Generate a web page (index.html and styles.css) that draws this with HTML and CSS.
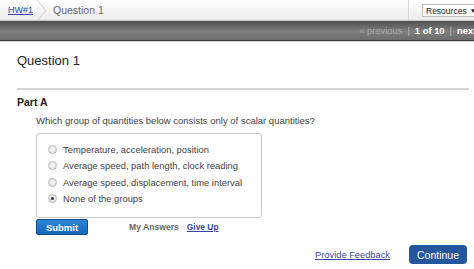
FILE: index.html
```html
<!DOCTYPE html>
<html>
<head>
<meta charset="utf-8">
<link rel="stylesheet" href="styles.css">
</head>
<body>
<header class="crumbs">
  <a class="crumb-link" href="#">HW#1</a>
  <svg class="chev" width="12" height="21" viewBox="0 0 12 21"><path d="M1 0 L10 10.5 L1 21" fill="none" stroke="#d0d0d0" stroke-width="1"/></svg>
  <span class="crumb-current">Question 1</span>
  <span class="spacer"></span>
  <span class="vdiv"></span>
  <span class="resources">Resources<span class="arrow">▼</span></span>
</header>
<nav class="pager">
  <span class="prev">« previous</span>
  <span class="sep">|</span>
  <span class="count">1 of 10</span>
  <span class="sep">|</span>
  <span class="next">next</span>
</nav>
<main class="content">
  <h1 class="title">Question 1</h1>
  <hr class="rule">
  <h2 class="part">Part A</h2>
  <div class="body">
    <p class="prompt">Which group of quantities below consists only of scalar quantities?</p>
    <div class="choices">
      <label class="choice"><span class="radio"></span>Temperature, acceleration, position</label>
      <label class="choice"><span class="radio"></span>Average speed, path length, clock reading</label>
      <label class="choice"><span class="radio"></span>Average speed, displacement, time interval</label>
      <label class="choice"><span class="radio checked"></span>None of the groups</label>
    </div>
    <div class="actions">
      <span class="submit">Submit</span>
      <span class="my-answers">My Answers</span>
      <a class="give-up" href="#">Give Up</a>
    </div>
  </div>
  <div class="footer">
    <a class="feedback" href="#">Provide Feedback</a>
    <span class="continue">Continue</span>
  </div>
</main>
</body>
</html>
```
FILE: styles.css
```css
* { box-sizing: border-box; }
html, body { margin: 0; padding: 0; }
body {
  width: 474px;
  height: 269px;
  overflow: hidden;
  background: #fff;
  font-family: "Liberation Sans", Arial, sans-serif;
  color: #333;
}
.crumbs {
  height: 21px;
  display: flex;
  align-items: center;
  background: linear-gradient(#ffffff, #ececec);
  border-bottom: 1px solid #c8c8c8;
}
.crumb-link {
  margin-left: 8px;
  font-size: 9px;
  color: #3344aa;
  text-decoration: underline;
}
.chev { margin-left: 3px; align-self: stretch; }
.crumb-current {
  margin-left: 5px;
  font-size: 10.5px;
  color: #6a6a6a;
}
.spacer { flex: 1; }
.vdiv {
  align-self: stretch;
  width: 1px;
  background: #d8d8d8;
  margin-right: 13px;
}
.resources {
  height: 13px;
  padding: 0 0 0 3px;
  border: 1px solid #bbb;
  border-right: none;
  background: #fff;
  font-size: 8.5px;
  line-height: 11px;
  color: #222;
  white-space: nowrap;
  width: 52px;
  overflow: hidden;
}
.arrow { font-size: 6.5px; margin-left: 3px; vertical-align: 1px; }
.pager {
  height: 20px;
  display: flex;
  align-items: center;
  justify-content: flex-end;
  gap: 5px;
  background: linear-gradient(#4f4f4f, #7f7f7f 55%, #6c6c6c);
  border-bottom: 1px solid #3a3a3a;
  box-shadow: 0 1px 0 #d0d0d0;
  font-size: 9.4px;
  white-space: nowrap;
  overflow: hidden;
}
.prev { color: #a8a8a8; }
.sep { color: #bbb; font-weight: normal; }
.count, .next { color: #fff; font-weight: bold; }
.next { width: 17px; overflow: hidden; }
.content { padding: 0 5px 0 17px; }
.title {
  margin: 12px 0 0;
  font-size: 13px;
  font-weight: normal;
  color: #222;
  line-height: 16px;
}
.rule {
  margin: 19px 0 0;
  border: none;
  height: 2px;
  background: #d4d4d4;
}
.part {
  margin: 6px 0 0;
  font-size: 10.5px;
  font-weight: bold;
  color: #222;
  line-height: 12px;
}
.body { padding-left: 19px; }
.prompt {
  margin: 6px 0 0;
  font-size: 9.5px;
  color: #444;
  line-height: 13px;
}
.choices {
  margin-top: 6px;
  width: 226px;
  height: 85px;
  border: 1px solid #c8c8c8;
  border-radius: 3px;
  padding: 7px 0 0 11px;
  display: flex;
  flex-direction: column;
}
.choice {
  display: flex;
  align-items: center;
  height: 16.5px;
  font-size: 9.4px;
  color: #444;
  white-space: nowrap;
}
.radio {
  width: 9px;
  height: 9px;
  border-radius: 50%;
  border: 1px solid #b8b8b8;
  background: radial-gradient(#f8f8f8, #dcdcdc);
  margin-right: 6px;
  flex: none;
  position: relative;
}
.radio.checked::after {
  content: "";
  position: absolute;
  left: 2px; top: 2px;
  width: 3px; height: 3px;
  border-radius: 50%;
  background: #333;
}
.actions {
  margin-top: 1px;
  display: flex;
  align-items: center;
  height: 16px;
}
.submit {
  width: 52px;
  height: 16px;
  background: linear-gradient(#2a86d6, #1668b8);
  border: 1px solid #0f4f8f;
  border-radius: 2px;
  color: #fff;
  font-weight: bold;
  font-size: 9.5px;
  display: flex;
  align-items: center;
  justify-content: center;
}
.my-answers {
  margin-left: 41px;
  font-size: 8.6px;
  font-weight: bold;
  color: #666;
}
.give-up {
  margin-left: 8px;
  font-size: 8.4px;
  font-weight: bold;
  color: #3344aa;
  text-decoration: underline;
}
.footer {
  margin-top: 10px;
  display: flex;
  align-items: center;
  justify-content: flex-end;
  padding-right: 2px;
}
.feedback {
  font-size: 9.3px;
  color: #3a4a9a;
  text-decoration: underline;
}
.continue {
  margin-left: 19px;
  width: 58px;
  height: 19px;
  background: #23569a;
  border-radius: 4px;
  color: #fff;
  font-size: 10.5px;
  display: flex;
  align-items: center;
  justify-content: center;
}
```
